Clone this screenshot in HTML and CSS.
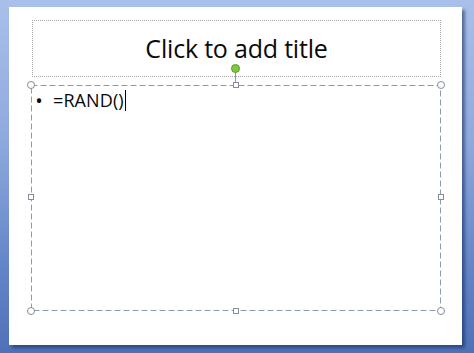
FILE: index.html
```html
<!DOCTYPE html>
<html>
<head>
<meta charset="utf-8">
<link rel="stylesheet" href="styles.css">
</head>
<body>
<div class="stage">
  <div class="slide">
    <div class="title-box">
      <span class="title-text">Click to add title</span>
    </div>
    <div class="content-box">
      <svg class="frame" width="410" height="226" viewBox="0 0 410 226">
        <rect x="0.5" y="0.5" width="409" height="225" fill="none" stroke="#8d9bb0" stroke-width="1" stroke-dasharray="6 3"/>
      </svg>
      <ul class="bullets">
        <li><span class="bullet">•</span><span class="bullet-text">=RAND()</span><span class="caret"></span></li>
      </ul>
      <span class="handle round tl"></span>
      <span class="handle round tr"></span>
      <span class="handle round bl"></span>
      <span class="handle round br"></span>
      <span class="handle square tm"></span>
      <span class="handle square bm"></span>
      <span class="handle square ml"></span>
      <span class="handle square mr"></span>
      <span class="rotate-stem"></span>
      <span class="rotate-knob"></span>
    </div>
  </div>
</div>
</body>
</html>
```

FILE: styles.css
```css
html, body {
  margin: 0;
  padding: 0;
}
body {
  width: 474px;
  height: 353px;
  overflow: hidden;
  background: linear-gradient(to bottom, #a9c0ea 0%, #8ea9dd 40%, #6485c8 75%, #4f71b8 100%);
  font-family: "Open Sans", "Liberation Sans", sans-serif;
}
.stage {
  padding: 7px 0 0 9px;
}
.slide {
  width: 453px;
  height: 338px;
  background: #ffffff;
  box-shadow: 3px 3px 3px rgba(20, 40, 90, 0.55);
  box-sizing: border-box;
  padding: 13px 0 0 22px;
}
.title-box {
  margin-left: 1px;
  width: 409px;
  height: 57px;
  box-sizing: border-box;
  border: 1px dotted #a6a6a6;
  display: flex;
  align-items: center;
  justify-content: center;
}
.title-text {
  font-size: 25px;
  color: #0a0a0a;
  letter-spacing: -0.2px;
  margin-top: -2px;
}
.content-box {
  position: relative;
  margin-top: 8px;
  width: 410px;
  height: 226px;
}
.frame {
  position: absolute;
  left: 0;
  top: 0;
}
.bullets {
  list-style: none;
  margin: 0;
  padding: 4px 0 0 0;
}
.bullets li {
  display: flex;
  align-items: center;
  height: 22px;
}
.bullet {
  font-size: 20px;
  width: 16px;
  margin-right: 6px;
  text-align: center;
  color: #0a0a0a;
}
.bullet-text {
  font-size: 18px;
  color: #0a0a0a;
  letter-spacing: 0.1px;
}
.caret {
  width: 1px;
  height: 21px;
  background: #000;
  margin-left: 1px;
}
.handle {
  position: absolute;
  box-sizing: border-box;
  background: #ffffff;
  border: 1px solid #848d99;
}
.handle.round {
  width: 8px;
  height: 8px;
  border-radius: 50%;
}
.handle.square {
  width: 6px;
  height: 6px;
}
.tl { left: -4px; top: -4px; }
.tr { right: -4px; top: -4px; }
.bl { left: -4px; bottom: -4px; }
.br { right: -4px; bottom: -4px; }
.tm { left: 202px; top: -3px; }
.bm { left: 202px; bottom: -3px; }
.ml { left: -3px; top: 109px; }
.mr { right: -3px; top: 109px; }
.rotate-stem {
  position: absolute;
  left: 204px;
  top: -13px;
  width: 1px;
  height: 10px;
  background: #8e9aab;
}
.rotate-knob {
  position: absolute;
  left: 200px;
  top: -21px;
  width: 9px;
  height: 9px;
  box-sizing: border-box;
  border-radius: 50%;
  background: #7dc93c;
  border: 1px solid #5a9a2a;
}
```
